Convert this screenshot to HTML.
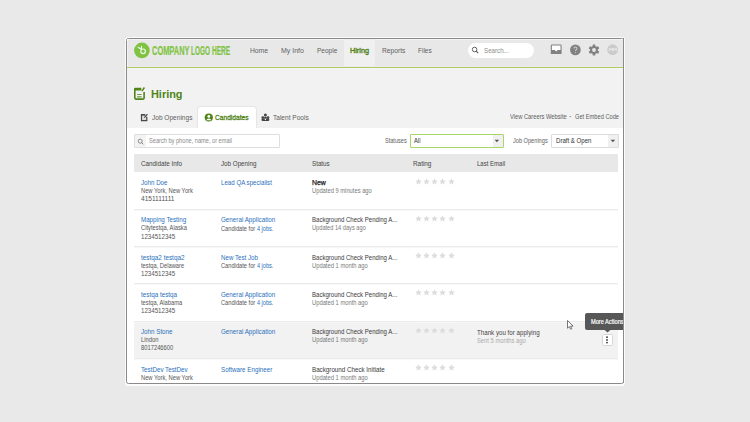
<!DOCTYPE html>
<html><head><meta charset="utf-8">
<style>
html,body{margin:0;padding:0}
body{width:750px;height:422px;overflow:hidden;background:#e9e9e9;position:relative;font-family:"Liberation Sans",sans-serif}
.a{position:absolute}
.t{position:absolute;white-space:nowrap;line-height:1;transform-origin:0 0}
</style></head><body>
<!-- frame -->
<div class="a" style="left:125px;top:37px;width:500px;height:349px;background:#fbfbfb;border-radius:3px"></div>
<div class="a" style="left:126px;top:38px;width:496px;height:344px;border:1px solid #8a8a8a;border-radius:2.5px;background:#fff"></div>
<!-- header -->
<div class="a" style="left:127px;top:39px;width:496px;height:28px;background:#e8e8e8"></div>
<div class="a" style="left:127px;top:66px;width:496px;height:1px;background:#ececec"></div>
<div class="a" style="left:127px;top:39px;width:496px;height:1px;background:#f4f4f4"></div>
<div class="a" style="left:127px;top:39px;width:1px;height:28px;background:#f4f4f4"></div>
<div class="a" style="left:127px;top:67px;width:496px;height:1px;background:#a9cc5a"></div>
<div class="a" style="left:127px;top:68px;width:496px;height:1px;background:#f6f6f8"></div>
<div class="a" style="left:344px;top:39px;width:31px;height:27px;background:#f0f0f0"></div>
<!-- gray content -->
<div class="a" style="left:127px;top:69px;width:496px;height:59px;background:#f2f2f2"></div>
<!-- logo -->
<svg class="a" style="left:133px;top:42px" width="18" height="17" viewBox="0 0 18 17">
<circle cx="8.9" cy="8.4" r="7.8" fill="#80c342"/>
<circle cx="10.1" cy="9.3" r="2.3" stroke="#eef7e6" stroke-width="1.2" fill="none"/>
<path d="M8.8 7.4 L4.6 5.2 M8.5 7.1 L8.5 3.9 M5.8 6 L7.6 6.2" stroke="#f4faef" stroke-width="1" fill="none"/>
</svg>
<!-- search pill -->
<div class="a" style="left:468px;top:42.5px;width:66px;height:15.5px;background:#fff;border-radius:8px"></div>
<svg class="a" style="left:471px;top:46px" width="9" height="9" viewBox="0 0 9 9">
<circle cx="3.6" cy="3.5" r="2.3" stroke="#5c5c5c" stroke-width="0.95" fill="none"/>
<path d="M5.3 5.2 L7.1 7.1" stroke="#5c5c5c" stroke-width="1.2"/>
</svg>
<!-- header icons -->
<svg class="a" style="left:550px;top:44px" width="13" height="11" viewBox="0 0 13 11">
<path d="M2 0.5 H10.4 Q11.6 0.5 11.6 1.7 V9.9 H0.8 V1.7 Q0.8 0.5 2 0.5 Z" fill="#818181"/>
<path d="M1.9 1.6 H10.5 V5.9 H7.7 L6.2 7.6 L4.7 5.9 H1.9 Z" fill="#fdfdfd"/>
</svg>
<svg class="a" style="left:569px;top:43.6px" width="13" height="12" viewBox="0 0 13 12">
<circle cx="6.4" cy="5.9" r="5.35" fill="#818181"/>
<path d="M4.9 4.5 a1.5 1.5 0 1 1 2.3 1.3 c-0.6 0.4 -0.7 0.6 -0.7 1.2" stroke="#c9c9c9" stroke-width="1.1" fill="none"/>
<circle cx="6.5" cy="8.6" r="0.65" fill="#c9c9c9"/>
</svg>
<svg class="a" style="left:588px;top:43.6px" width="12" height="12" viewBox="0 0 12 12">
<g fill="#818181" transform="translate(6,6)">
<rect x="-1.3" y="-5.4" width="2.6" height="10.8" rx=".5"/>
<rect x="-1.3" y="-5.4" width="2.6" height="10.8" rx=".5" transform="rotate(60)"/>
<rect x="-1.3" y="-5.4" width="2.6" height="10.8" rx=".5" transform="rotate(120)"/>
<circle r="3.9"/>
</g>
<circle cx="6" cy="6" r="1.9" fill="#e8e8e8"/>
</svg>
<svg class="a" style="left:607px;top:43.6px" width="12" height="12" viewBox="0 0 12 12">
<circle cx="5.6" cy="5.7" r="5.4" fill="#cbcbcb"/>
<path d="M2.4 7.1 V4.1 L3.85 6 L5.3 4.1 V7.1 M6.3 7.1 V4.1 L7.75 6 L9.2 4.1 V7.1" stroke="#f0f0f0" stroke-width="0.8" fill="none"/>
</svg>
<!-- title icon -->
<svg class="a" style="left:133px;top:86px" width="14" height="15" viewBox="0 0 14 15">
<path d="M1.8 3 V12.1 Q1.8 13.1 2.8 13.1 H10.1 Q11.1 13.1 11.1 12.1 V5.9" stroke="#4f8418" stroke-width="1.6" fill="none"/>
<path d="M2.2 1.8 H8.3 V4.4 H1 V3 Q1 1.8 2.2 1.8 Z" fill="#4f8418"/>
<path d="M8.9 5.2 L11.4 1.5" stroke="#4f8418" stroke-width="1.4"/>
<path d="M4.1 8.5 H8.6 M4.1 10.9 H8.6" stroke="#4f8418" stroke-width="1.1" opacity=".8"/>
</svg>
<!-- tabs -->
<div class="a" style="left:198px;top:107px;width:57.5px;height:21px;background:#fff;border-radius:2px 2px 0 0;box-shadow:0 0 1.5px rgba(0,0,0,.26)"></div>
<div class="a" style="left:196px;top:128px;width:62px;height:3px;background:#fff"></div>
<svg class="a" style="left:140px;top:113px" width="9" height="9" viewBox="0 0 9 9">
<rect x="1.5" y="2" width="5.3" height="5.6" fill="#dcdcdc"/>
<path d="M1.5 2 V7.6 H6.8 V3.8" stroke="#484848" stroke-width="1.2" fill="none"/>
<rect x="0.9" y="1" width="4.4" height="1.6" fill="#484848"/>
<path d="M4.4 4.6 L7.4 1.1" stroke="#484848" stroke-width="1.2"/>
</svg>
<svg class="a" style="left:204px;top:113px" width="10" height="10" viewBox="0 0 10 10">
<circle cx="4.8" cy="4.5" r="4.1" fill="#4f8418"/>
<circle cx="4.8" cy="3.4" r="1.4" fill="#fff"/>
<path d="M2.5 7.2 a2.3 1.8 0 0 1 4.6 0 Z" fill="#fff"/>
</svg>
<svg class="a" style="left:261px;top:113px" width="10" height="10" viewBox="0 0 10 10">
<g fill="#444">
<circle cx="4.4" cy="2.1" r="1.5"/>
<circle cx="1.8" cy="4.6" r="1.35"/><circle cx="7" cy="4.6" r="1.35"/>
<path d="M2.9 4.6 Q4.4 2.9 5.9 4.6 V5.6 H2.9 Z"/>
<rect x="0.5" y="5.6" width="7.8" height="2.3" rx="0.8"/>
</g>
<circle cx="4.4" cy="6.4" r="0.7" fill="#eee"/>
</svg>
<!-- search input -->
<div class="a" style="left:134px;top:134px;width:144px;height:11.5px;border:1px solid #dedede;background:#fff;border-radius:1px"></div>
<div class="a" style="left:135px;top:135px;width:10.5px;height:11.5px;background:#f3f3f3"></div>
<svg class="a" style="left:136.5px;top:137.5px" width="8" height="8" viewBox="0 0 8 8">
<circle cx="3.2" cy="3.2" r="2.0" stroke="#808080" stroke-width="0.9" fill="none"/>
<path d="M4.7 4.7 L6.3 6.3" stroke="#808080" stroke-width="1"/>
</svg>
<!-- statuses select -->
<div class="a" style="left:410px;top:134px;width:91.5px;height:12px;border:1.3px solid #a8d56c;background:#fff;border-radius:1px"></div>
<div class="a" style="left:492.5px;top:135.3px;width:10px;height:12px;background:#f0f0f0"></div>
<svg class="a" style="left:494px;top:139px" width="6" height="4" viewBox="0 0 6 4"><path d="M0.6 0.8 H5.2 L2.9 3.3 Z" fill="#555"/></svg>
<!-- job openings select -->
<div class="a" style="left:551px;top:134px;width:66px;height:12px;border:1px solid #dcdcdc;background:#fff;border-radius:1px"></div>
<div class="a" style="left:607.5px;top:135px;width:10px;height:12px;background:#f0f0f0"></div>
<svg class="a" style="left:609.5px;top:139px" width="6" height="4" viewBox="0 0 6 4"><path d="M0.6 0.8 H5.2 L2.9 3.3 Z" fill="#555"/></svg>
<!-- table -->
<div class="a" style="left:134px;top:154.3px;width:484px;height:18px;background:#e8e8e8"></div>
<div class="a" style="left:134px;top:321.8px;width:484px;height:37.3px;background:#f2f2f2"></div>
<div class="a" style="left:134px;top:209px;width:484px;height:1px;background:#ebebeb"></div><div class="a" style="left:134px;top:210px;width:484px;height:1px;background:#f7f7f7"></div>
<div class="a" style="left:134px;top:246px;width:484px;height:1px;background:#ebebeb"></div><div class="a" style="left:134px;top:247px;width:484px;height:1px;background:#f7f7f7"></div>
<div class="a" style="left:134px;top:283px;width:484px;height:1px;background:#ebebeb"></div><div class="a" style="left:134px;top:284px;width:484px;height:1px;background:#f7f7f7"></div>
<div class="a" style="left:134px;top:321px;width:484px;height:1px;background:#ebebeb"></div><div class="a" style="left:134px;top:322px;width:484px;height:1px;background:#f7f7f7"></div>
<div class="a" style="left:134px;top:358px;width:484px;height:1px;background:#ebebeb"></div><div class="a" style="left:134px;top:359px;width:484px;height:1px;background:#f7f7f7"></div>

<!-- stars -->
<svg class="a" style="left:414.70px;top:177.50px" width="7" height="7" viewBox="0 0 20 20"><path d="M10 0.8 L12.9 7.1 L19.4 7.5 L14.5 11.9 L16 18.6 L10 15.2 L4 18.6 L5.5 11.9 L0.6 7.5 L7.1 7.1 Z" fill="#dcdcdc"/></svg><svg class="a" style="left:422.95px;top:177.50px" width="7" height="7" viewBox="0 0 20 20"><path d="M10 0.8 L12.9 7.1 L19.4 7.5 L14.5 11.9 L16 18.6 L10 15.2 L4 18.6 L5.5 11.9 L0.6 7.5 L7.1 7.1 Z" fill="#dcdcdc"/></svg><svg class="a" style="left:431.20px;top:177.50px" width="7" height="7" viewBox="0 0 20 20"><path d="M10 0.8 L12.9 7.1 L19.4 7.5 L14.5 11.9 L16 18.6 L10 15.2 L4 18.6 L5.5 11.9 L0.6 7.5 L7.1 7.1 Z" fill="#dcdcdc"/></svg><svg class="a" style="left:439.45px;top:177.50px" width="7" height="7" viewBox="0 0 20 20"><path d="M10 0.8 L12.9 7.1 L19.4 7.5 L14.5 11.9 L16 18.6 L10 15.2 L4 18.6 L5.5 11.9 L0.6 7.5 L7.1 7.1 Z" fill="#dcdcdc"/></svg><svg class="a" style="left:447.70px;top:177.50px" width="7" height="7" viewBox="0 0 20 20"><path d="M10 0.8 L12.9 7.1 L19.4 7.5 L14.5 11.9 L16 18.6 L10 15.2 L4 18.6 L5.5 11.9 L0.6 7.5 L7.1 7.1 Z" fill="#dcdcdc"/></svg><svg class="a" style="left:414.70px;top:214.78px" width="7" height="7" viewBox="0 0 20 20"><path d="M10 0.8 L12.9 7.1 L19.4 7.5 L14.5 11.9 L16 18.6 L10 15.2 L4 18.6 L5.5 11.9 L0.6 7.5 L7.1 7.1 Z" fill="#dcdcdc"/></svg><svg class="a" style="left:422.95px;top:214.78px" width="7" height="7" viewBox="0 0 20 20"><path d="M10 0.8 L12.9 7.1 L19.4 7.5 L14.5 11.9 L16 18.6 L10 15.2 L4 18.6 L5.5 11.9 L0.6 7.5 L7.1 7.1 Z" fill="#dcdcdc"/></svg><svg class="a" style="left:431.20px;top:214.78px" width="7" height="7" viewBox="0 0 20 20"><path d="M10 0.8 L12.9 7.1 L19.4 7.5 L14.5 11.9 L16 18.6 L10 15.2 L4 18.6 L5.5 11.9 L0.6 7.5 L7.1 7.1 Z" fill="#dcdcdc"/></svg><svg class="a" style="left:439.45px;top:214.78px" width="7" height="7" viewBox="0 0 20 20"><path d="M10 0.8 L12.9 7.1 L19.4 7.5 L14.5 11.9 L16 18.6 L10 15.2 L4 18.6 L5.5 11.9 L0.6 7.5 L7.1 7.1 Z" fill="#dcdcdc"/></svg><svg class="a" style="left:447.70px;top:214.78px" width="7" height="7" viewBox="0 0 20 20"><path d="M10 0.8 L12.9 7.1 L19.4 7.5 L14.5 11.9 L16 18.6 L10 15.2 L4 18.6 L5.5 11.9 L0.6 7.5 L7.1 7.1 Z" fill="#dcdcdc"/></svg><svg class="a" style="left:414.70px;top:252.06px" width="7" height="7" viewBox="0 0 20 20"><path d="M10 0.8 L12.9 7.1 L19.4 7.5 L14.5 11.9 L16 18.6 L10 15.2 L4 18.6 L5.5 11.9 L0.6 7.5 L7.1 7.1 Z" fill="#dcdcdc"/></svg><svg class="a" style="left:422.95px;top:252.06px" width="7" height="7" viewBox="0 0 20 20"><path d="M10 0.8 L12.9 7.1 L19.4 7.5 L14.5 11.9 L16 18.6 L10 15.2 L4 18.6 L5.5 11.9 L0.6 7.5 L7.1 7.1 Z" fill="#dcdcdc"/></svg><svg class="a" style="left:431.20px;top:252.06px" width="7" height="7" viewBox="0 0 20 20"><path d="M10 0.8 L12.9 7.1 L19.4 7.5 L14.5 11.9 L16 18.6 L10 15.2 L4 18.6 L5.5 11.9 L0.6 7.5 L7.1 7.1 Z" fill="#dcdcdc"/></svg><svg class="a" style="left:439.45px;top:252.06px" width="7" height="7" viewBox="0 0 20 20"><path d="M10 0.8 L12.9 7.1 L19.4 7.5 L14.5 11.9 L16 18.6 L10 15.2 L4 18.6 L5.5 11.9 L0.6 7.5 L7.1 7.1 Z" fill="#dcdcdc"/></svg><svg class="a" style="left:447.70px;top:252.06px" width="7" height="7" viewBox="0 0 20 20"><path d="M10 0.8 L12.9 7.1 L19.4 7.5 L14.5 11.9 L16 18.6 L10 15.2 L4 18.6 L5.5 11.9 L0.6 7.5 L7.1 7.1 Z" fill="#dcdcdc"/></svg><svg class="a" style="left:414.70px;top:289.34px" width="7" height="7" viewBox="0 0 20 20"><path d="M10 0.8 L12.9 7.1 L19.4 7.5 L14.5 11.9 L16 18.6 L10 15.2 L4 18.6 L5.5 11.9 L0.6 7.5 L7.1 7.1 Z" fill="#dcdcdc"/></svg><svg class="a" style="left:422.95px;top:289.34px" width="7" height="7" viewBox="0 0 20 20"><path d="M10 0.8 L12.9 7.1 L19.4 7.5 L14.5 11.9 L16 18.6 L10 15.2 L4 18.6 L5.5 11.9 L0.6 7.5 L7.1 7.1 Z" fill="#dcdcdc"/></svg><svg class="a" style="left:431.20px;top:289.34px" width="7" height="7" viewBox="0 0 20 20"><path d="M10 0.8 L12.9 7.1 L19.4 7.5 L14.5 11.9 L16 18.6 L10 15.2 L4 18.6 L5.5 11.9 L0.6 7.5 L7.1 7.1 Z" fill="#dcdcdc"/></svg><svg class="a" style="left:439.45px;top:289.34px" width="7" height="7" viewBox="0 0 20 20"><path d="M10 0.8 L12.9 7.1 L19.4 7.5 L14.5 11.9 L16 18.6 L10 15.2 L4 18.6 L5.5 11.9 L0.6 7.5 L7.1 7.1 Z" fill="#dcdcdc"/></svg><svg class="a" style="left:447.70px;top:289.34px" width="7" height="7" viewBox="0 0 20 20"><path d="M10 0.8 L12.9 7.1 L19.4 7.5 L14.5 11.9 L16 18.6 L10 15.2 L4 18.6 L5.5 11.9 L0.6 7.5 L7.1 7.1 Z" fill="#dcdcdc"/></svg><svg class="a" style="left:414.70px;top:326.62px" width="7" height="7" viewBox="0 0 20 20"><path d="M10 0.8 L12.9 7.1 L19.4 7.5 L14.5 11.9 L16 18.6 L10 15.2 L4 18.6 L5.5 11.9 L0.6 7.5 L7.1 7.1 Z" fill="#dcdcdc"/></svg><svg class="a" style="left:422.95px;top:326.62px" width="7" height="7" viewBox="0 0 20 20"><path d="M10 0.8 L12.9 7.1 L19.4 7.5 L14.5 11.9 L16 18.6 L10 15.2 L4 18.6 L5.5 11.9 L0.6 7.5 L7.1 7.1 Z" fill="#dcdcdc"/></svg><svg class="a" style="left:431.20px;top:326.62px" width="7" height="7" viewBox="0 0 20 20"><path d="M10 0.8 L12.9 7.1 L19.4 7.5 L14.5 11.9 L16 18.6 L10 15.2 L4 18.6 L5.5 11.9 L0.6 7.5 L7.1 7.1 Z" fill="#dcdcdc"/></svg><svg class="a" style="left:439.45px;top:326.62px" width="7" height="7" viewBox="0 0 20 20"><path d="M10 0.8 L12.9 7.1 L19.4 7.5 L14.5 11.9 L16 18.6 L10 15.2 L4 18.6 L5.5 11.9 L0.6 7.5 L7.1 7.1 Z" fill="#dcdcdc"/></svg><svg class="a" style="left:447.70px;top:326.62px" width="7" height="7" viewBox="0 0 20 20"><path d="M10 0.8 L12.9 7.1 L19.4 7.5 L14.5 11.9 L16 18.6 L10 15.2 L4 18.6 L5.5 11.9 L0.6 7.5 L7.1 7.1 Z" fill="#dcdcdc"/></svg><svg class="a" style="left:414.70px;top:363.90px" width="7" height="7" viewBox="0 0 20 20"><path d="M10 0.8 L12.9 7.1 L19.4 7.5 L14.5 11.9 L16 18.6 L10 15.2 L4 18.6 L5.5 11.9 L0.6 7.5 L7.1 7.1 Z" fill="#dcdcdc"/></svg><svg class="a" style="left:422.95px;top:363.90px" width="7" height="7" viewBox="0 0 20 20"><path d="M10 0.8 L12.9 7.1 L19.4 7.5 L14.5 11.9 L16 18.6 L10 15.2 L4 18.6 L5.5 11.9 L0.6 7.5 L7.1 7.1 Z" fill="#dcdcdc"/></svg><svg class="a" style="left:431.20px;top:363.90px" width="7" height="7" viewBox="0 0 20 20"><path d="M10 0.8 L12.9 7.1 L19.4 7.5 L14.5 11.9 L16 18.6 L10 15.2 L4 18.6 L5.5 11.9 L0.6 7.5 L7.1 7.1 Z" fill="#dcdcdc"/></svg><svg class="a" style="left:439.45px;top:363.90px" width="7" height="7" viewBox="0 0 20 20"><path d="M10 0.8 L12.9 7.1 L19.4 7.5 L14.5 11.9 L16 18.6 L10 15.2 L4 18.6 L5.5 11.9 L0.6 7.5 L7.1 7.1 Z" fill="#dcdcdc"/></svg><svg class="a" style="left:447.70px;top:363.90px" width="7" height="7" viewBox="0 0 20 20"><path d="M10 0.8 L12.9 7.1 L19.4 7.5 L14.5 11.9 L16 18.6 L10 15.2 L4 18.6 L5.5 11.9 L0.6 7.5 L7.1 7.1 Z" fill="#dcdcdc"/></svg>
<!-- more actions -->
<div class="a" style="left:585px;top:313px;width:40px;height:16.5px;background:#575757;border-radius:2px"></div>
<svg class="a" style="left:603px;top:329px" width="9" height="4" viewBox="0 0 9 4"><path d="M0.5 0 H8.5 L4.5 3.5 Z" fill="#575757"/></svg>
<div class="a" style="left:601.5px;top:334px;width:9.5px;height:10px;background:#fff;border:1px solid #d6d6d6;border-radius:1.5px"></div>
<svg class="a" style="left:604px;top:335px" width="6" height="10" viewBox="0 0 6 10"><g fill="#333"><circle cx="3" cy="2.2" r="0.9"/><circle cx="3" cy="4.9" r="0.9"/><circle cx="3" cy="7.6" r="0.9"/></g></svg>
<div class="t" id="t0" style="left:151.95px;top:44.24px;font-size:13.3px;color:#80c342;font-weight:700;transform:scaleX(0.5598);-webkit-text-stroke:0.2px #80c342;">COMPANY</div>
<div class="t" id="t1" style="left:191.05px;top:44.24px;font-size:13.3px;color:#80c342;font-weight:700;transform:scaleX(0.4827);-webkit-text-stroke:0.2px #80c342;">LOGO</div>
<div class="t" id="t2" style="left:211.55px;top:44.24px;font-size:13.3px;color:#80c342;font-weight:700;transform:scaleX(0.4898);-webkit-text-stroke:0.2px #80c342;">HERE</div>
<div class="t" id="t3" style="left:250.25px;top:47.38px;font-size:7.0px;color:#5e5e5e;font-weight:400;transform:scaleX(0.9632);">Home</div>
<div class="t" id="t4" style="left:281.35px;top:47.38px;font-size:7.0px;color:#5e5e5e;font-weight:400;transform:scaleX(0.9977);">My Info</div>
<div class="t" id="t5" style="left:317.35px;top:47.38px;font-size:7.0px;color:#5e5e5e;font-weight:400;transform:scaleX(0.9313);">People</div>
<div class="t" id="t6" style="left:381.65px;top:47.38px;font-size:7.0px;color:#5e5e5e;font-weight:400;transform:scaleX(0.9545);">Reports</div>
<div class="t" id="t7" style="left:417.65px;top:47.38px;font-size:7.0px;color:#5e5e5e;font-weight:400;transform:scaleX(0.9268);">Files</div>
<div class="t" id="t8" style="left:350.35px;top:47.38px;font-size:7.0px;color:#4f8418;font-weight:400;transform:scaleX(1.0384);-webkit-text-stroke:0.35px #4f8418;">Hiring</div>
<div class="t" id="t9" style="left:483.55px;top:47.28px;font-size:7.0px;color:#8c8c8c;font-weight:400;transform:scaleX(0.8852);">Search...</div>
<div class="t" id="t10" style="left:150.85px;top:87.88px;font-size:11.6px;color:#4f8418;font-weight:700;transform:scaleX(0.9403);">Hiring</div>
<div class="t" id="t11" style="left:151.55px;top:113.82px;font-size:7.3px;color:#5e5e5e;font-weight:400;transform:scaleX(0.8972);">Job Openings</div>
<div class="t" id="t12" style="left:215.45px;top:113.82px;font-size:7.3px;color:#4f8418;font-weight:400;transform:scaleX(0.9073);-webkit-text-stroke:0.3px #4f8418;">Candidates</div>
<div class="t" id="t13" style="left:272.65px;top:113.82px;font-size:7.3px;color:#5e5e5e;font-weight:400;transform:scaleX(0.8978);">Talent Pools</div>
<div class="t" id="t14" style="left:510.35px;top:113.61px;font-size:6.6px;color:#5e5e5e;font-weight:400;transform:scaleX(0.8723);">View Careers Website</div>
<div class="t" id="t15" style="left:569.15px;top:113.61px;font-size:6.6px;color:#5e5e5e;font-weight:700;transform:scaleX(1.0000);">·</div>
<div class="t" id="t16" style="left:574.55px;top:113.61px;font-size:6.6px;color:#5e5e5e;font-weight:400;transform:scaleX(0.8635);">Get Embed Code</div>
<div class="t" id="t17" style="left:149.15px;top:137.58px;font-size:6.4px;color:#8a8a8a;font-weight:400;transform:scaleX(0.8827);">Search by phone, name, or email</div>
<div class="t" id="t18" style="left:384.65px;top:138.21px;font-size:6.6px;color:#5e5e5e;font-weight:400;transform:scaleX(0.8453);">Statuses</div>
<div class="t" id="t19" style="left:414.05px;top:138.21px;font-size:6.6px;color:#333;font-weight:400;transform:scaleX(0.8796);">All</div>
<div class="t" id="t20" style="left:512.65px;top:138.21px;font-size:6.6px;color:#5e5e5e;font-weight:400;transform:scaleX(0.8525);">Job Openings</div>
<div class="t" id="t21" style="left:555.95px;top:138.21px;font-size:6.6px;color:#333;font-weight:400;transform:scaleX(0.9199);">Draft &amp; Open</div>
<div class="t" id="t22" style="left:140.85px;top:159.78px;font-size:7.0px;color:#444;font-weight:400;transform:scaleX(0.9002);">Candidate Info</div>
<div class="t" id="t23" style="left:221.25px;top:159.78px;font-size:7.0px;color:#444;font-weight:400;transform:scaleX(0.8916);">Job Opening</div>
<div class="t" id="t24" style="left:312.05px;top:159.78px;font-size:7.0px;color:#444;font-weight:400;transform:scaleX(0.8913);">Status</div>
<div class="t" id="t25" style="left:413.05px;top:159.78px;font-size:7.0px;color:#444;font-weight:400;transform:scaleX(0.9093);">Rating</div>
<div class="t" id="t26" style="left:477.05px;top:159.78px;font-size:7.0px;color:#444;font-weight:400;transform:scaleX(0.8597);">Last Email</div>
<div class="t" id="t27" style="left:140.85px;top:180.13px;font-size:6.7px;color:#2a70bb;font-weight:400;transform:scaleX(0.9253);">John Doe</div>
<div class="t" id="t28" style="left:140.85px;top:188.21px;font-size:6.6px;color:#555;font-weight:400;transform:scaleX(0.8741);">New York, New York</div>
<div class="t" id="t29" style="left:140.85px;top:196.31px;font-size:6.6px;color:#555;font-weight:400;transform:scaleX(0.9931);">4151111111</div>
<div class="t" id="t30" style="left:221.35px;top:180.13px;font-size:6.7px;color:#2a70bb;font-weight:400;transform:scaleX(0.9189);">Lead QA specialist</div>
<div class="t" id="t31" style="left:312.25px;top:180.13px;font-size:6.7px;color:#222;font-weight:400;transform:scaleX(1.0306);-webkit-text-stroke:0.25px #222;">New</div>
<div class="t" id="t32" style="left:312.25px;top:188.21px;font-size:6.6px;color:#7a7a7a;font-weight:400;transform:scaleX(0.8770);">Updated 9 minutes ago</div>
<div class="t" id="t33" style="left:140.85px;top:217.41px;font-size:6.7px;color:#2a70bb;font-weight:400;transform:scaleX(0.9284);">Mapping Testing</div>
<div class="t" id="t34" style="left:140.85px;top:225.49px;font-size:6.6px;color:#555;font-weight:400;transform:scaleX(0.8756);">Citytestqa, Alaska</div>
<div class="t" id="t35" style="left:140.85px;top:233.59px;font-size:6.6px;color:#555;font-weight:400;transform:scaleX(0.9326);">1234512345</div>
<div class="t" id="t36" style="left:221.35px;top:217.41px;font-size:6.7px;color:#2a70bb;font-weight:400;transform:scaleX(0.9362);">General Application</div>
<div class="t" id="t37" style="left:221.35px;top:225.69px;font-size:6.6px;color:#555;font-weight:400;transform:scaleX(0.8638);">Candidate for</div>
<div class="t" id="t38" style="left:257.25px;top:225.69px;font-size:6.6px;color:#2a70bb;font-weight:400;transform:scaleX(0.8386);">4 jobs.</div>
<div class="t" id="t39" style="left:312.25px;top:217.41px;font-size:6.7px;color:#3a3a3a;font-weight:400;transform:scaleX(0.9043);">Background Check Pending A...</div>
<div class="t" id="t40" style="left:312.25px;top:225.49px;font-size:6.6px;color:#7a7a7a;font-weight:400;transform:scaleX(0.8580);">Updated 14 days ago</div>
<div class="t" id="t41" style="left:140.85px;top:254.69px;font-size:6.7px;color:#2a70bb;font-weight:400;transform:scaleX(0.9511);">testqa2 testqa2</div>
<div class="t" id="t42" style="left:140.85px;top:262.77px;font-size:6.6px;color:#555;font-weight:400;transform:scaleX(0.8710);">testqa, Delaware</div>
<div class="t" id="t43" style="left:140.85px;top:270.87px;font-size:6.6px;color:#555;font-weight:400;transform:scaleX(0.9326);">1234512345</div>
<div class="t" id="t44" style="left:221.35px;top:254.69px;font-size:6.7px;color:#2a70bb;font-weight:400;transform:scaleX(0.9243);">New Test Job</div>
<div class="t" id="t45" style="left:221.35px;top:262.97px;font-size:6.6px;color:#555;font-weight:400;transform:scaleX(0.8638);">Candidate for</div>
<div class="t" id="t46" style="left:257.25px;top:262.97px;font-size:6.6px;color:#2a70bb;font-weight:400;transform:scaleX(0.8386);">4 jobs.</div>
<div class="t" id="t47" style="left:312.25px;top:254.69px;font-size:6.7px;color:#3a3a3a;font-weight:400;transform:scaleX(0.9043);">Background Check Pending A...</div>
<div class="t" id="t48" style="left:312.25px;top:262.77px;font-size:6.6px;color:#7a7a7a;font-weight:400;transform:scaleX(0.8796);">Updated 1 month ago</div>
<div class="t" id="t49" style="left:140.85px;top:291.97px;font-size:6.7px;color:#2a70bb;font-weight:400;transform:scaleX(0.9426);">testqa testqa</div>
<div class="t" id="t50" style="left:140.85px;top:300.05px;font-size:6.6px;color:#555;font-weight:400;transform:scaleX(0.8690);">testqa, Alabama</div>
<div class="t" id="t51" style="left:140.85px;top:308.15px;font-size:6.6px;color:#555;font-weight:400;transform:scaleX(0.9326);">1234512345</div>
<div class="t" id="t52" style="left:221.35px;top:291.97px;font-size:6.7px;color:#2a70bb;font-weight:400;transform:scaleX(0.9362);">General Application</div>
<div class="t" id="t53" style="left:221.35px;top:300.25px;font-size:6.6px;color:#555;font-weight:400;transform:scaleX(0.8638);">Candidate for</div>
<div class="t" id="t54" style="left:257.25px;top:300.25px;font-size:6.6px;color:#2a70bb;font-weight:400;transform:scaleX(0.8386);">4 jobs.</div>
<div class="t" id="t55" style="left:312.25px;top:291.97px;font-size:6.7px;color:#3a3a3a;font-weight:400;transform:scaleX(0.9043);">Background Check Pending A...</div>
<div class="t" id="t56" style="left:312.25px;top:300.05px;font-size:6.6px;color:#7a7a7a;font-weight:400;transform:scaleX(0.8796);">Updated 1 month ago</div>
<div class="t" id="t57" style="left:140.85px;top:329.25px;font-size:6.7px;color:#2a70bb;font-weight:400;transform:scaleX(0.9315);">John Stone</div>
<div class="t" id="t58" style="left:140.85px;top:337.33px;font-size:6.6px;color:#555;font-weight:400;transform:scaleX(0.8796);">Lindon</div>
<div class="t" id="t59" style="left:140.85px;top:345.43px;font-size:6.6px;color:#555;font-weight:400;transform:scaleX(0.8796);">8017246600</div>
<div class="t" id="t60" style="left:221.35px;top:329.25px;font-size:6.7px;color:#2a70bb;font-weight:400;transform:scaleX(0.9362);">General Application</div>
<div class="t" id="t61" style="left:312.25px;top:329.25px;font-size:6.7px;color:#3a3a3a;font-weight:400;transform:scaleX(0.9043);">Background Check Pending A...</div>
<div class="t" id="t62" style="left:312.25px;top:337.33px;font-size:6.6px;color:#7a7a7a;font-weight:400;transform:scaleX(0.8796);">Updated 1 month ago</div>
<div class="t" id="t63" style="left:477.15px;top:329.75px;font-size:6.7px;color:#444;font-weight:400;transform:scaleX(0.9251);">Thank you for applying</div>
<div class="t" id="t64" style="left:477.15px;top:337.83px;font-size:6.6px;color:#aaa;font-weight:400;transform:scaleX(0.8796);">Sent 5 months ago</div>
<div class="t" id="t65" style="left:140.85px;top:366.53px;font-size:6.7px;color:#2a70bb;font-weight:400;transform:scaleX(0.9315);">TestDev TestDev</div>
<div class="t" id="t66" style="left:140.85px;top:374.61px;font-size:6.6px;color:#555;font-weight:400;transform:scaleX(0.8741);">New York, New York</div>
<div class="t" id="t67" style="left:221.35px;top:366.53px;font-size:6.7px;color:#2a70bb;font-weight:400;transform:scaleX(0.9315);">Software Engineer</div>
<div class="t" id="t68" style="left:312.25px;top:366.53px;font-size:6.7px;color:#3a3a3a;font-weight:400;transform:scaleX(0.9315);">Background Check Initiate</div>
<div class="t" id="t69" style="left:312.25px;top:374.61px;font-size:6.6px;color:#7a7a7a;font-weight:400;transform:scaleX(0.8796);">Updated 1 month ago</div>
<div class="t" id="t70" style="left:590.85px;top:318.64px;font-size:6.8px;color:#fff;font-weight:400;transform:scaleX(0.8300);-webkit-text-stroke:0.2px #fff;">More Actions</div>
<!-- cursor -->
<svg class="a" style="left:566.6px;top:320px" width="8" height="11" viewBox="0 0 8 11"><path d="M0.5 0.5 V8.2 L2.3 6.5 L3.6 9.2 L4.8 8.7 L3.6 6.1 H6.1 Z" fill="#fff" stroke="#555" stroke-width="0.8" stroke-linejoin="round"/></svg>
<!-- frame right/bottom cover for tooltip clip -->
<div class="a" style="left:623px;top:38px;width:1px;height:345px;background:#8a8a8a"></div>
<div class="a" style="left:624px;top:37px;width:126px;height:385px;background:#e9e9e9"></div>
<div class="a" style="left:624px;top:38px;width:1px;height:346px;background:#fbfbfb"></div>
</body></html>
